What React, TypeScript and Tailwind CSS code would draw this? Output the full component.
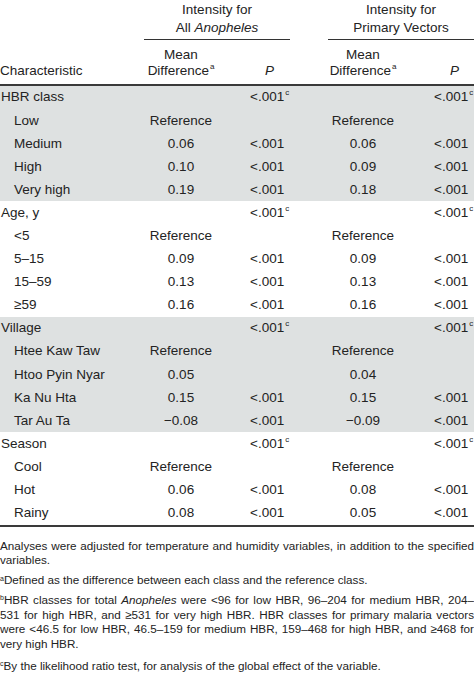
import React from "react";

type Row = [string, string, string, string, string];
type Section = { label: string; gray: boolean; rows: Row[] };

const sections: Section[] = [
  {
    label: "HBR class",
    gray: true,
    rows: [
      ["Low", "Reference", "", "Reference", ""],
      ["Medium", "0.06", "<.001", "0.06", "<.001"],
      ["High", "0.10", "<.001", "0.09", "<.001"],
      ["Very high", "0.19", "<.001", "0.18", "<.001"],
    ],
  },
  {
    label: "Age, y",
    gray: false,
    rows: [
      ["<5", "Reference", "", "Reference", ""],
      ["5–15", "0.09", "<.001", "0.09", "<.001"],
      ["15–59", "0.13", "<.001", "0.13", "<.001"],
      ["≥59", "0.16", "<.001", "0.16", "<.001"],
    ],
  },
  {
    label: "Village",
    gray: true,
    rows: [
      ["Htee Kaw Taw", "Reference", "", "Reference", ""],
      ["Htoo Pyin Nyar", "0.05", "", "0.04", ""],
      ["Ka Nu Hta", "0.15", "<.001", "0.15", "<.001"],
      ["Tar Au Ta", "−0.08", "<.001", "−0.09", "<.001"],
    ],
  },
  {
    label: "Season",
    gray: false,
    rows: [
      ["Cool", "Reference", "", "Reference", ""],
      ["Hot", "0.06", "<.001", "0.08", "<.001"],
      ["Rainy", "0.08", "<.001", "0.05", "<.001"],
    ],
  },
];

const rowCls = "flex h-[23.1px] items-center";

function Sup({ children }: { children: React.ReactNode }) {
  return <sup className="text-[8px] ml-[1px] top-[-0.75em]">{children}</sup>;
}

export default function App() {
  return (
    <div
      className="w-[474px] h-[676px] bg-white text-[#232323] overflow-hidden"
      style={{ fontFamily: '"Liberation Sans", Arial, sans-serif' }}
    >
      {/* Header */}
      <div className="text-[13.5px]">
        <div className="flex">
          <div className="w-[144px]" />
          <div className="w-[146px] text-center leading-[18px] pt-[1px] pb-[2px] border-b-[1.5px] border-[#333]">
            <div>Intensity for</div>
            <div>
              All <i>Anopheles</i>
            </div>
          </div>
          <div className="w-[38px]" />
          <div className="w-[146px] text-center leading-[18px] pt-[1px] pb-[2px] border-b-[1.5px] border-[#333]">
            <div>Intensity for</div>
            <div>Primary Vectors</div>
          </div>
        </div>
        <div className="flex h-[46px] items-end pb-[5px] leading-[16px] border-b-2 border-[#3a3a3a]">
          <div className="w-[144px]">Characteristic</div>
          <div className="w-[72px] text-center pl-[2px]">
            <div>Mean</div>
            <div className="whitespace-nowrap">
              Difference<Sup>a</Sup>
            </div>
          </div>
          <div className="w-[112px] pl-[49px]">
            <i>P</i>
          </div>
          <div className="w-[70px] text-center">
            <div>Mean</div>
            <div className="whitespace-nowrap">
              Difference<Sup>a</Sup>
            </div>
          </div>
          <div className="w-[76px] pl-[52px]">
            <i>P</i>
          </div>
        </div>
      </div>

      {/* Body */}
      <div className="text-[13.5px] border-b-2 border-[#3a3a3a]">
        {sections.map((s) => (
          <div key={s.label} className={s.gray ? "bg-[#dee1e1]" : "bg-white"}>
            <div className={rowCls}>
              <div className="w-[216px] pl-[1px]">{s.label}</div>
              <div className="w-[112px] pl-[34px] whitespace-nowrap">
                &lt;.001<Sup>c</Sup>
              </div>
              <div className="w-[70px]" />
              <div className="w-[76px] pl-[36px] whitespace-nowrap">
                &lt;.001<Sup>c</Sup>
              </div>
            </div>
            {s.rows.map((r) => (
              <div key={r[0]} className={rowCls}>
                <div className="w-[144px] pl-[14px] whitespace-nowrap">{r[0]}</div>
                <div className="w-[72px] text-center pl-[2px]">{r[1]}</div>
                <div className="w-[112px] pl-[34px]">{r[2]}</div>
                <div className="w-[70px] text-center">{r[3]}</div>
                <div className="w-[76px] pl-[36px]">{r[4]}</div>
              </div>
            ))}
          </div>
        ))}
      </div>

      {/* Footnotes */}
      <div className="text-[11.7px] leading-[14.7px] text-justify pt-[12px] flex flex-col gap-[5px]">
        <p>
          Analyses were adjusted for temperature and humidity variables, in addition to the specified
          variables.
        </p>
        <p>
          <sup className="text-[7px]">a</sup>Defined as the difference between each class and the
          reference class.
        </p>
        <p>
          <sup className="text-[7px]">b</sup>HBR classes for total <i>Anopheles</i> were &lt;96 for low
          HBR, 96–204 for medium HBR, 204–531 for high HBR, and ≥531 for very high HBR. HBR classes
          for primary malaria vectors were &lt;46.5 for low HBR, 46.5–159 for medium HBR, 159–468 for
          high HBR, and ≥468 for very high HBR.
        </p>
        <p className="mt-[2px]">
          <sup className="text-[7px]">c</sup>By the likelihood ratio test, for analysis of the global
          effect of the variable.
        </p>
      </div>
    </div>
  );
}
